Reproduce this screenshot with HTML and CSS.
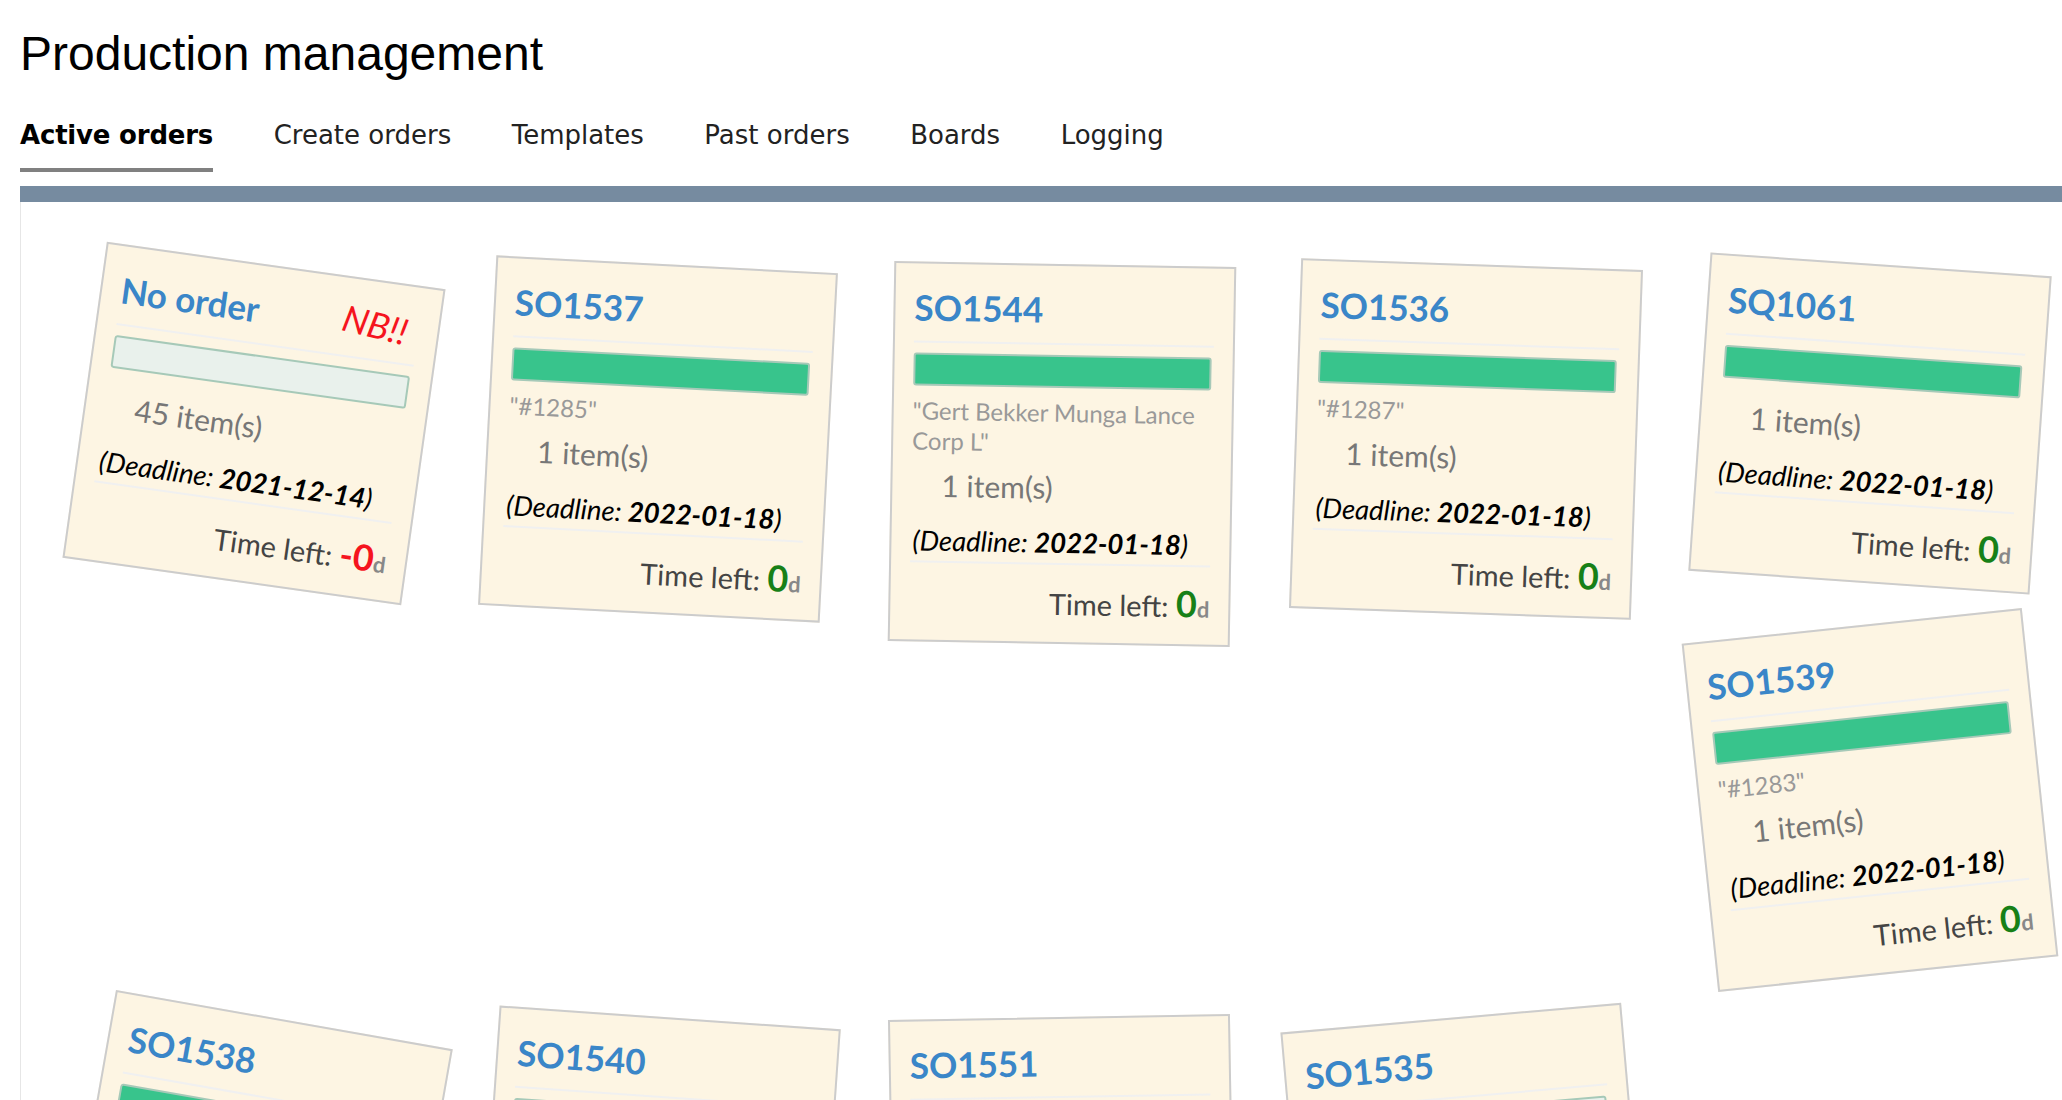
FILE: index.html
```html
<!DOCTYPE html>
<html lang="en">
<head>
<meta charset="utf-8">
<title>Production management</title>
<link rel="stylesheet" href="styles.css">
</head>
<body>
<div class="page">
  <h1 class="title">Production management</h1>
  <nav class="tabs">
    <a class="tab active">Active orders</a>
    <a class="tab">Create orders</a>
    <a class="tab">Templates</a>
    <a class="tab">Past orders</a>
    <a class="tab">Boards</a>
    <a class="tab">Logging</a>
  </nav>
  <div class="strip"></div>
  <main class="board">
    <article class="card r8">
      <div class="head"><span class="order">No order</span><span class="nb">NB!!</span></div>
      <div class="bar empty"></div>
      <div class="items">45 item(s)</div>
      <div class="deadline">(Deadline: <b>2021-12-14</b>)</div>
      <div class="left">Time left: <b class="late">-0</b><b class="unit">d</b></div>
    </article>
    <article class="card r3">
      <div class="head"><span class="order">SO1537</span></div>
      <div class="bar full"></div>
      <div class="note">"#1285"</div>
      <div class="items">1 item(s)</div>
      <div class="deadline">(Deadline: <b>2022-01-18</b>)</div>
      <div class="left">Time left: <b class="ok">0</b><b class="unit">d</b></div>
    </article>
    <article class="card r1">
      <div class="head"><span class="order">SO1544</span></div>
      <div class="bar full"></div>
      <div class="note">"Gert Bekker Munga Lance<br>Corp L"</div>
      <div class="items">1 item(s)</div>
      <div class="deadline">(Deadline: <b>2022-01-18</b>)</div>
      <div class="left">Time left: <b class="ok">0</b><b class="unit">d</b></div>
    </article>
    <article class="card r2">
      <div class="head"><span class="order">SO1536</span></div>
      <div class="bar full"></div>
      <div class="note">"#1287"</div>
      <div class="items">1 item(s)</div>
      <div class="deadline">(Deadline: <b>2022-01-18</b>)</div>
      <div class="left">Time left: <b class="ok">0</b><b class="unit">d</b></div>
    </article>
    <article class="card r4">
      <div class="head"><span class="order">SQ1061</span></div>
      <div class="bar full"></div>
      <div class="items">1 item(s)</div>
      <div class="deadline">(Deadline: <b>2022-01-18</b>)</div>
      <div class="left">Time left: <b class="ok">0</b><b class="unit">d</b></div>
    </article>
    <article class="card rm6">
      <div class="head"><span class="order">SO1539</span></div>
      <div class="bar full"></div>
      <div class="note">"#1283"</div>
      <div class="items">1 item(s)</div>
      <div class="deadline">(Deadline: <b>2022-01-18</b>)</div>
      <div class="left">Time left: <b class="ok">0</b><b class="unit">d</b></div>
    </article>
    <article class="card tall r10">
      <div class="head"><span class="order">SO1538</span></div>
      <div class="bar full"></div>
    </article>
    <article class="card tall r4">
      <div class="head"><span class="order">SO1540</span></div>
      <div class="bar empty"></div>
    </article>
    <article class="card tall rm1">
      <div class="head"><span class="order">SO1551</span></div>
      <div class="bar full"></div>
    </article>
    <article class="card tall rm5">
      <div class="head"><span class="order">SO1535</span></div>
      <div class="bar empty"></div>
    </article>
  </main>
</div>
</body>
</html>
```
FILE: styles.css
```css
html, body { margin: 0; padding: 0; height: 100%; overflow: hidden; background: #fff; }
.page { height: 1100px; overflow: hidden; padding-left: 20px; }
.title { margin: 0; padding-top: 27px; height: 54px; font: 400 48px/54px "Liberation Sans", Arial, sans-serif; color: #000; }
.tabs { display: flex; gap: 60.5px; margin-top: 38px; height: 53px; font: 26px/32px "DejaVu Sans", sans-serif; }
.tab { display: block; color: #222; height: 53px; box-sizing: border-box; }
.tab.active { font-weight: 700; letter-spacing: -0.2px; color: #000; border-bottom: 4px solid #808080; }
.strip { height: 16px; margin-top: 14px; background: #768ba0; }
.board { width: 2100px; box-sizing: border-box; padding: 41px 0 0 31px; border-left: 1px solid #e6e6e6; height: 900px; font-family: "Comic Sans MS", Lato, sans-serif; }
.card { float: left; box-sizing: border-box; width: 342px; margin: 21px 31px; padding: 0 19px 16px; background: #fdf5e3; border: 2px solid #ccc; }
.card.tall { height: 350px; }
.r1 { transform: rotate(1deg); }
.r2 { transform: rotate(2deg); }
.r3 { transform: rotate(3deg); }
.r4 { transform: rotate(4deg); }
.r8 { transform: rotate(8deg); }
.r10 { transform: rotate(10deg); }
.rm1 { transform: rotate(-1deg); }
.rm5 { transform: rotate(-5deg); }
.rm6 { transform: rotate(-6deg); }
.head { display: flex; justify-content: space-between; height: 79px; box-sizing: border-box; padding-top: 20px; border-bottom: 2px solid #f0f0f0; }
.order { font-size: 35px; line-height: 46px; font-weight: 700; color: #3a86c8; }
.nb { font-size: 36px; line-height: 46px; margin: -1px 12px 0 0; color: #f5141e; font-style: italic; transform: rotate(6deg); }
.bar { height: 33px; margin: 10px 2px 0 0; box-sizing: border-box; border: 2px solid #a6c9b8; border-radius: 3px; }
.bar.full { background: #38c48c; }
.bar.empty { background: #e9f1ec; }
.note { margin: 10px 0 -9px; font-size: 24px; line-height: 30px; color: #999; }
.items { padding-left: 30px; margin-top: 19px; font-size: 30px; line-height: 38px; color: #777; }
.deadline { margin-top: 21px; padding: 0 0 4px 2px; font-size: 27.5px; line-height: 32px; font-style: italic; color: #000; border-bottom: 2px solid #f0f0f0; white-space: nowrap; }
.deadline b { line-height: 1; }
.left { margin-top: 17px; text-align: right; font-size: 29px; line-height: 44px; color: #444; }
.late, .ok, .unit { line-height: 1; }
.late { font-size: 36px; color: #f5141e; }
.ok { font-size: 36px; color: #178017; }
.unit { font-size: 22px; color: #888; }
```
